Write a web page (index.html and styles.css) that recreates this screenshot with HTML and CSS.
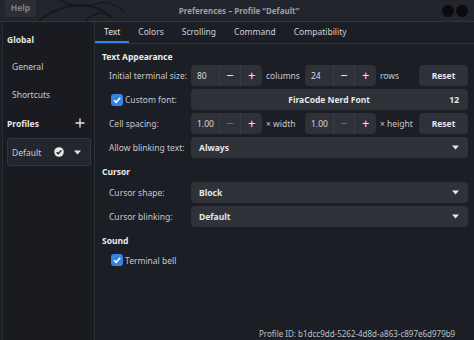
FILE: index.html
```html
<!DOCTYPE html>
<html>
<head>
<meta name="viewport" content="width=device-width, initial-scale=1.0">
  <title>Preferences – Profile “Default”</title>
  <link rel="stylesheet" href="styles.css">
</head>
<body>
  <div class="header">
    <svg class="header-art" width="140" height="21" viewBox="0 0 140 21">
      <path d="M38 21 C50 12 62 6 78 5 C92 4 104 10 112 18" fill="none" stroke="#17181d" stroke-width="2"/>
      <path d="M60 0 C70 6 84 8 96 4 C106 1 116 4 124 12" fill="none" stroke="#17181d" stroke-width="1.5"/>
      <path d="M86 21 C90 15 98 12 106 14" fill="none" stroke="#17181d" stroke-width="1.5"/>
    </svg>
    <div class="help-btn">Help</div>
    <div class="title">Preferences – Profile “Default”</div>
    <div class="win-btns">
      <span class="win-btn"></span>
      <span class="win-btn"></span>
    </div>
  </div>

  <div class="window">
    <div class="sidebar">
      <div class="side-head">Global</div>
      <div class="side-item">General</div>
      <div class="side-item">Shortcuts</div>
      <div class="side-head">
        <span>Profiles</span>
        <svg class="plus" width="10" height="10" viewBox="0 0 10 10">
          <path d="M5 0.5 V9.5 M0.5 5 H9.5" stroke="#e6e6e8" stroke-width="1.4"/>
        </svg>
      </div>
      <div class="profile">
        <span class="profile-name">Default</span>
        <svg class="default-mark" width="10" height="10" viewBox="0 0 10 10">
          <circle cx="5" cy="5" r="4.8" fill="#e8e8ea"/>
          <path d="M2.6 5.2 L4.3 6.8 L7.4 3.4" fill="none" stroke="#1c1e25" stroke-width="1.4"/>
        </svg>
        <svg class="arrow" width="7" height="5" viewBox="0 0 7 5">
          <path d="M0 0.5 H7 L3.5 4.5 Z" fill="#e8e8ea"/>
        </svg>
      </div>
    </div>

    <div class="main">
      <div class="tabs">
        <div class="tab active">Text</div>
        <div class="tab">Colors</div>
        <div class="tab">Scrolling</div>
        <div class="tab">Command</div>
        <div class="tab">Compatibility</div>
      </div>

      <div class="page">
        <div class="section">Text Appearance</div>

        <div class="row">
          <div class="label">Initial terminal size:</div>
          <div class="spin">
            <div class="spin-entry">80</div>
            <div class="spin-btn">&minus;</div>
            <div class="spin-btn">+</div>
          </div>
          <div class="unit">columns</div>
          <div class="spin">
            <div class="spin-entry">24</div>
            <div class="spin-btn">&minus;</div>
            <div class="spin-btn">+</div>
          </div>
          <div class="unit">rows</div>
          <div class="button">Reset</div>
        </div>

        <div class="row">
          <div class="label check-label">
            <span class="check"><svg width="12" height="12" viewBox="0 0 12 12"><path d="M3 6.2 L5.1 8.3 L9.2 3.8" fill="none" stroke="#fff" stroke-width="1.5"/></svg></span>
            Custom font:
          </div>
          <div class="font-btn">
            <span class="font-name">FiraCode Nerd Font</span>
            <span class="font-size">12</span>
          </div>
        </div>

        <div class="row">
          <div class="label">Cell spacing:</div>
          <div class="spin">
            <div class="spin-entry">1.00</div>
            <div class="spin-btn dim">&minus;</div>
            <div class="spin-btn">+</div>
          </div>
          <div class="unit">× width</div>
          <div class="spin">
            <div class="spin-entry">1.00</div>
            <div class="spin-btn dim">&minus;</div>
            <div class="spin-btn">+</div>
          </div>
          <div class="unit">× height</div>
          <div class="button">Reset</div>
        </div>

        <div class="row">
          <div class="label">Allow blinking text:</div>
          <div class="dropdown">
            <span>Always</span>
            <svg width="7" height="5" viewBox="0 0 7 5"><path d="M0 0.5 H7 L3.5 4.5 Z" fill="#e8e8ea"/></svg>
          </div>
        </div>

        <div class="section gap">Cursor</div>

        <div class="row">
          <div class="label">Cursor shape:</div>
          <div class="dropdown">
            <span>Block</span>
            <svg width="7" height="5" viewBox="0 0 7 5"><path d="M0 0.5 H7 L3.5 4.5 Z" fill="#e8e8ea"/></svg>
          </div>
        </div>

        <div class="row">
          <div class="label">Cursor blinking:</div>
          <div class="dropdown">
            <span>Default</span>
            <svg width="7" height="5" viewBox="0 0 7 5"><path d="M0 0.5 H7 L3.5 4.5 Z" fill="#e8e8ea"/></svg>
          </div>
        </div>

        <div class="section gap">Sound</div>

        <div class="row short">
          <div class="label check-label">
            <span class="check"><svg width="12" height="12" viewBox="0 0 12 12"><path d="M3 6.2 L5.1 8.3 L9.2 3.8" fill="none" stroke="#fff" stroke-width="1.5"/></svg></span>
            Terminal bell
          </div>
        </div>

        <div class="profile-id">Profile ID: b1dcc9dd-5262-4d8d-a863-c897e6d979b9</div>
      </div>
    </div>
  </div>
</body>
</html>
```

FILE: styles.css
```css
body {
  margin: 0;
  width: 474px;
  height: 340px;
  overflow: hidden;
  background-color: #1c1e25;
  color: #d6d7da;
  font-family: "Noto Sans", "Open Sans", sans-serif;
  font-size: 8.5px;
}

.header {
  position: relative;
  height: 21px;
  display: flex;
  align-items: center;
  background-color: #23252c;
  border-bottom: 1px solid #33353d;
}

.header-art {
  position: absolute;
  left: 0;
  top: 0;
}

.help-btn {
  position: relative;
  margin-left: 5px;
  align-self: flex-start;
  width: 31px;
  height: 17px;
  line-height: 16px;
  text-align: center;
  border-radius: 0 0 3px 3px;
  background-color: #2c2e35;
  color: #7e8086;
  font-weight: bold;
}

.title {
  position: relative;
  flex: 1;
  text-align: center;
  color: #9d9ea3;
  font-weight: bold;
  font-size: 8px;
}

.win-btns {
  display: flex;
  gap: 2px;
  margin-right: 6px;
}

.win-btn {
  width: 12px;
  height: 12px;
  border-radius: 50%;
  background-color: #0b0b0d;
}

.window {
  display: flex;
  height: 318px;
}

.sidebar {
  width: 92px;
  margin-left: 2px;
  padding-top: 3px;
  background-color: #1a1b21;
  border-left: 1px solid #2a2c33;
  border-right: 1px solid #2e3038;
}

.side-head {
  height: 28px;
  display: flex;
  align-items: center;
  justify-content: space-between;
  padding: 0 9px 0 4px;
  font-weight: bold;
  color: #e4e4e6;
}

.side-item {
  height: 28px;
  line-height: 28px;
  padding-left: 9px;
  color: #c9cacd;
}

.profile {
  display: flex;
  align-items: center;
  height: 26px;
  margin: 1px 3px 0 4px;
  padding: 0 9px 0 4px;
  border: 1px solid #34363e;
  border-radius: 3px;
  background-color: #24262d;
  color: #c9cacd;
}

.profile-name {
  flex: 1;
}

.default-mark {
  margin-right: 10px;
}

.main {
  flex: 1;
}

.tabs {
  display: flex;
  height: 21px;
  border-bottom: 1px solid #33353d;
}

.tab {
  padding: 0 9px;
  line-height: 20px;
  color: #cfd0d3;
}

.tab.active {
  color: #e8e8ea;
  box-shadow: inset 0 -2px 0 #3584e4;
}

.page {
  position: relative;
  height: 296px;
  padding: 6px 6px 0 7px;
}

.section {
  height: 14px;
  line-height: 14px;
  margin-bottom: 1px;
  font-weight: bold;
  color: #eaeaec;
}

.section.gap {
  margin-top: 7px;
  margin-bottom: 3px;
}

.row {
  display: flex;
  align-items: center;
  height: 21px;
  margin-bottom: 3px;
  padding-left: 7px;
}

.row.short {
  height: 18px;
}

.label {
  width: 82px;
  flex-shrink: 0;
  color: #c6c7cb;
}

.check-label {
  display: flex;
  align-items: center;
  margin-left: 2px;
  width: 80px;
  gap: 2px;
}

.check {
  width: 12px;
  height: 12px;
  border-radius: 3px;
  background-color: #3584e4;
}

.check svg {
  display: block;
}

.spin {
  display: flex;
  width: 71px;
  height: 21px;
  border-radius: 4px;
  background-color: #2f3139;
  flex-shrink: 0;
}

.spin-entry {
  width: 22px;
  padding-left: 6px;
  line-height: 21px;
  color: #d8d9dc;
}

.spin-btn {
  width: 21px;
  line-height: 20px;
  text-align: center;
  font-size: 13px;
  color: #e6e6e8;
  border-left: 1px solid #3a3c44;
}

.spin-btn.dim {
  color: #6d6f75;
}

.unit {
  width: 39px;
  padding-left: 4px;
  flex-shrink: 0;
  color: #c6c7cb;
}

.button {
  width: 49px;
  height: 21px;
  line-height: 21px;
  text-align: center;
  border-radius: 4px;
  background-color: #2f3139;
  font-weight: bold;
  color: #e6e6e8;
}

.font-btn {
  flex: 1;
  height: 21px;
  display: flex;
  align-items: center;
  border-radius: 4px;
  background-color: #2f3139;
  font-weight: bold;
  color: #e6e6e8;
}

.font-name {
  flex: 1;
  text-align: center;
  padding-left: 18px;
}

.font-size {
  margin-right: 9px;
}

.dropdown {
  flex: 1;
  height: 21px;
  display: flex;
  align-items: center;
  justify-content: space-between;
  padding: 0 9px 0 8px;
  border-radius: 4px;
  background-color: #30323a;
  font-weight: bold;
  color: #e6e6e8;
}

.profile-id {
  position: absolute;
  left: 164px;
  top: 284px;
  white-space: nowrap;
  font-size: 8px;
  color: #bfc0c4;
}
```
